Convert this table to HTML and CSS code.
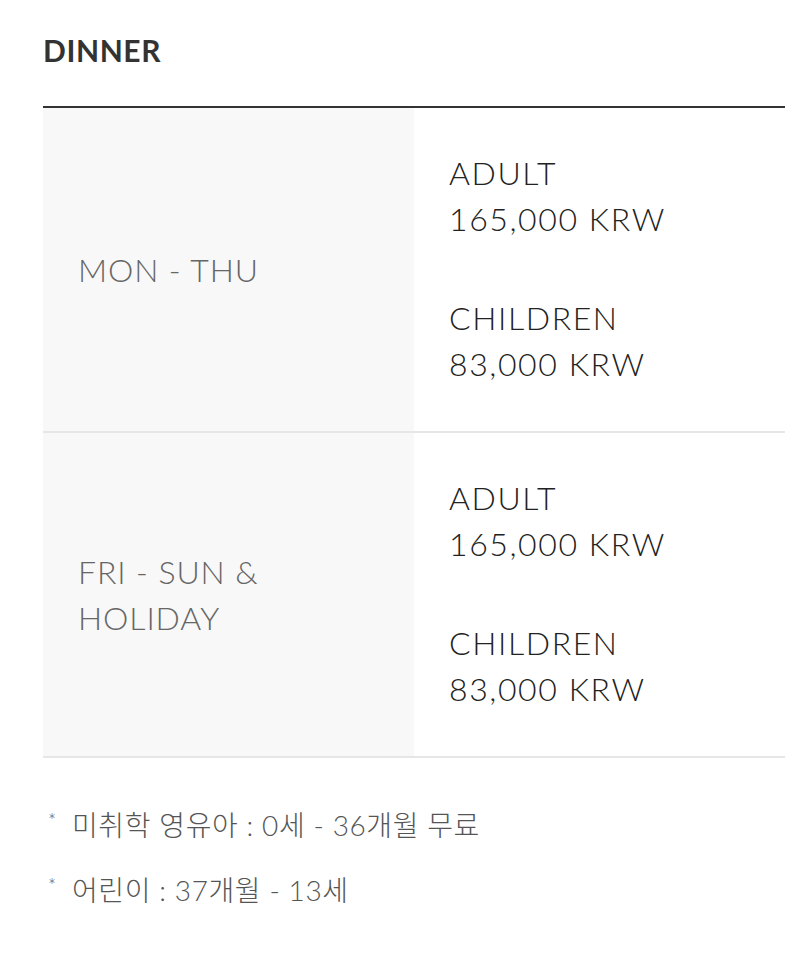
FILE: index.html
```html
<!DOCTYPE html>
<html lang="ko">
<head>
<meta charset="utf-8">
<link rel="stylesheet" href="styles.css">
</head>
<body>
<div class="page">
  <h2 class="title">DINNER</h2>
  <div class="table">
    <div class="row">
      <div class="day">MON - THU</div>
      <div class="prices">
        <div class="price-block"><div>ADULT</div><div>165,000 KRW</div></div>
        <div class="price-block"><div>CHILDREN</div><div>83,000 KRW</div></div>
      </div>
    </div>
    <div class="row">
      <div class="day">FRI - SUN &amp;<br>HOLIDAY</div>
      <div class="prices">
        <div class="price-block"><div>ADULT</div><div>165,000 KRW</div></div>
        <div class="price-block"><div>CHILDREN</div><div>83,000 KRW</div></div>
      </div>
    </div>
  </div>
  <ul class="notes">
    <li><span class="star">*</span>미취학 영유아 : 0세 - 36개월 무료</li>
    <li><span class="star">*</span>어린이 : 37개월 - 13세</li>
  </ul>
</div>
</body>
</html>
```

FILE: styles.css
```css
html, body {
  margin: 0;
  padding: 0;
  background: #fff;
}
body {
  font-family: Lato, "Noto Sans CJK KR", sans-serif;
}
.page {
  padding: 0 15px 0 43px;
}
.title {
  margin: 0;
  padding-top: 32px;
  font-size: 30px;
  line-height: 36px;
  font-weight: 700;
  color: #333;
  letter-spacing: 0.6px;
  height: 106px;
  box-sizing: border-box;
}
.table {
  border-top: 2px solid #333;
}
.row {
  display: grid;
  grid-template-columns: 371px 1fr;
  border-bottom: 2px solid #e6e6e6;
}
.day {
  background: #f8f8f8;
  display: flex;
  align-items: center;
  padding-left: 35px;
  font-size: 32px;
  line-height: 46px;
  font-weight: 300;
  color: #666;
  letter-spacing: 0.9px;
}
.prices {
  padding: 42px 0 44px 35px;
  display: flex;
  flex-direction: column;
  gap: 53px;
  font-size: 32px;
  line-height: 46px;
  font-weight: 300;
  color: #222;
  letter-spacing: 1.6px;
}
.notes {
  list-style: none;
  margin: 0;
  padding: 47px 0 0 5px;
  font-family: Lato, "Noto Sans CJK KR", sans-serif;
  font-size: 28px;
  font-weight: 300;
  color: #555;
  letter-spacing: 0.6px;
}
.notes li {
  line-height: 40px;
  margin-bottom: 25px;
  display: flex;
}
.star {
  font-size: 19px;
  width: 24px;
  line-height: 32px;
}
```
